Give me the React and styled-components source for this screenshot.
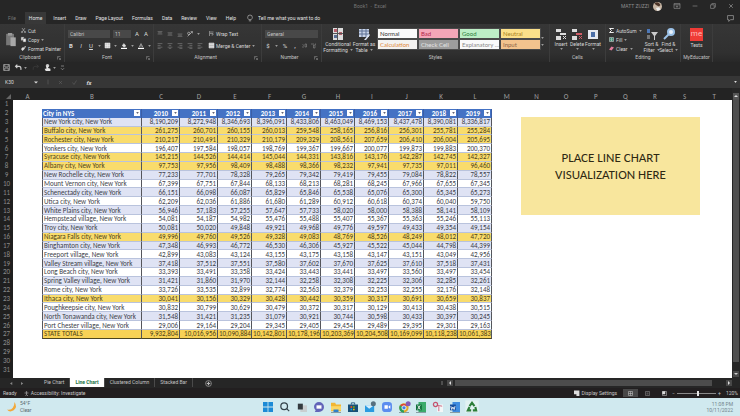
import styled, { createGlobalStyle, css } from "styled-components";

const GlobalStyle = createGlobalStyle`
  * {
    box-sizing: border-box;
  }
  body {
    margin: 0;
    background: #262626;
    font-family: Roboto, "Liberation Sans", sans-serif;
    font-size: 5px;
    color: #d8d8d8;
  }
  button, input, select {
    margin: 0;
    padding: 0;
    border: 0;
    background: none;
    color: inherit;
    font: inherit;
  }
`;

const Window = styled.div`
  display: flex;
  flex-direction: column;
  height: 100vh;
  overflow: hidden;
`;

const Spacer = styled.div`
  flex: 1;
`;

const Glyph = styled.svg`
  display: block;
  flex: none;
  width: ${(p) => p.$w || 8}px;
  height: ${(p) => p.$h || p.$w || 8}px;
  overflow: visible;
  fill: none;
  stroke: ${(p) => p.$color || "#d0d0d0"};
  opacity: ${(p) => (p.$dim ? 0.45 : 1)};
`;

/* ---------- title bar ---------- */

const TitleBar = styled.header`
  display: grid;
  grid-template-columns: 1fr auto 1fr;
  align-items: center;
  flex: none;
  height: 12px;
  padding: 0 6px;
  color: #8c8c8c;
`;

const TitleText = styled.span`
  color: #777;
  white-space: pre;
`;

const WindowControls = styled.div`
  display: flex;
  align-items: center;
  justify-content: flex-end;
  gap: 12px;
`;

const Account = styled.div`
  display: flex;
  align-items: center;
  gap: 4px;
`;

const IconButton = styled.button`
  display: flex;
  flex: none;
  align-items: center;
  justify-content: center;
  gap: 2px;
`;

/* ---------- ribbon ---------- */

const Tabs = styled.nav`
  display: flex;
  align-items: center;
  flex: none;
  gap: 1px;
  height: 12px;
  padding: 0 6px 0 4px;
`;

const Tab = styled.button`
  height: 12px;
  padding: 0 4px;
  white-space: nowrap;
  color: ${(p) => (p.$dim ? "#777" : "#e4e4e4")};
  background: ${(p) => (p.$active ? "#383838" : "none")};
  margin-left: ${(p) => (p.$active ? 4 : 0)}px;
  margin-right: ${(p) => (p.$active ? 2 : 0)}px;
`;

const TellMe = styled.label`
  display: flex;
  align-items: center;
  gap: 5px;
  margin-left: 6px;
`;

const TellMeInput = styled.input`
  width: 80px;
  &::placeholder {
    color: #e4e4e4;
    opacity: 1;
  }
`;

const Ribbon = styled.div`
  display: flex;
  flex: none;
  height: 38px;
  background: linear-gradient(#363636, #303030 75%, #282828);
`;

const Group = styled.section`
  display: flex;
  flex-direction: column;
  flex: none;
  width: ${(p) => p.$w}px;
  padding: 2px 3px 0;
  border-right: 1px solid #3c3c3c;
`;

const GroupBody = styled.div`
  display: flex;
  flex: 1;
  gap: ${(p) => p.$gap || 0}px;
`;

const GroupFooter = styled.div`
  display: flex;
  align-items: center;
  justify-content: center;
  flex: none;
  height: 9px;
  line-height: 9px;
  color: #c4c4c4;
`;

const GroupTitle = styled.span`
  flex: 1;
  text-align: center;
`;

const Stack = styled.div`
  display: flex;
  flex-direction: column;
  gap: ${(p) => p.$gap || 0}px;
  padding-top: ${(p) => p.$top || 0}px;
`;

const Row = styled.div`
  display: flex;
  align-items: center;
  height: ${(p) => p.$h || 11}px;
  gap: ${(p) => p.$gap || 3}px;
`;

const Command = styled.button`
  display: flex;
  align-items: center;
  flex: none;
  gap: 2px;
  height: ${(p) => p.$h || 9}px;
  line-height: 8px;
  white-space: nowrap;
`;

const BigCommand = styled.button`
  display: flex;
  flex-direction: column;
  align-items: center;
  flex: none;
  width: ${(p) => p.$w}px;
  padding-top: 2px;
  line-height: 6px;
  gap: 1px;
  white-space: nowrap;
`;

const CommandLine = styled.span`
  display: flex;
  align-items: center;
  justify-content: center;
  gap: 2px;
`;

const Select = styled.select`
  appearance: none;
  flex: none;
  width: ${(p) => p.$w}px;
  height: 8px;
  padding: 0 2px;
  background: #484848;
  color: #c4c4c4;
`;

const Letter = styled.span`
  width: 6px;
  text-align: center;
  font-size: 6px;
  font-weight: ${(p) => (p.$bold ? 700 : 400)};
  font-style: ${(p) => (p.$italic ? "italic" : "normal")};
  text-decoration: ${(p) => (p.$underline ? "underline" : "none")};
`;

const Gallery = styled.div`
  display: grid;
  grid-template-columns: repeat(4, 39px);
  grid-auto-rows: 9px;
  gap: 2px;
  height: 22px;
  margin-top: 2px;
  padding: 1px;
  background: #4a4a4a;
`;

const StyleCell = styled.button`
  padding: 0 2px;
  overflow: hidden;
  background: ${(p) => p.$bg};
  color: ${(p) => p.$fg};
  font-family: Lato, sans-serif;
  font-size: 6px;
  line-height: 9px;
  text-align: left;
  white-space: nowrap;
`;

const AddInLogo = styled.span`
  display: block;
  width: 13px;
  height: 13px;
  background: #ef3b36;
  color: #fbb;
  font-size: 8px;
  line-height: 12px;
  text-align: center;
`;

/* ---------- quick access and formula bar ---------- */

const QuickAccess = styled.div`
  display: flex;
  align-items: flex-start;
  flex: none;
  gap: 5px;
  height: 14px;
  padding: 1px 3px 0;
`;

const FormulaBar = styled.div`
  display: flex;
  align-items: center;
  flex: none;
  height: 12px;
  padding: 0 3px 0 5px;
  gap: 9px;
  background: #363636;
`;

const NameBox = styled.input`
  width: 20px;
`;

const FormulaInput = styled.input`
  flex: 1;
  min-width: 0;
`;

/* ---------- sheet ---------- */

const SheetArea = styled.main`
  display: flex;
  flex: 1;
  min-height: 0;
  background: #262626;
`;

const Canvas = styled.div`
  position: relative;
  flex: 1;
  min-width: 0;
  overflow: hidden;
  background: #fff;
`;

const Sheet = styled.table`
  width: 100%;
  height: calc(100% + 5px);
  table-layout: fixed;
  border-spacing: 0;
  color: #38383e;
  font-family: Calibri, Carlito, Lato, sans-serif;
  font-size: 7px;
  line-height: 7px;
`;

const Col = styled.col`
  width: ${(p) => (p.$w ? `${p.$w}px` : "auto")};
`;

const ColumnLetter = styled.th`
  height: 12px;
  padding: 4px 0 0;
  background: #232323;
  color: #a0a0a0;
  font-weight: 400;
  font-size: 7px;
`;

const RowNumber = styled.th`
  height: 8px;
  padding: 0 0 1px;
  background: #1f1f1f;
  color: #8a8a8a;
  font-weight: 400;
  text-align: center;
`;

const Cell = styled.td`
  padding: 0;
`;

const fills = {
  band: "#dfe3f4",
  plain: "#fff",
  gold: "#f9dc6c",
  total: "#f8d256",
};

const dataCell = css`
  padding: 0 1px;
  border-right: 1px solid #55565c;
  border-bottom: 1px solid ${(p) => (p.$fill === "total" ? "#4d451f" : "#b9c3dd")};
  background: ${(p) => fills[p.$fill]};
  color: ${(p) => (p.$fill === "gold" || p.$fill === "total" ? "#4d4219" : "#3c3e48")};
  white-space: nowrap;
`;

const CityCell = styled.td`
  ${dataCell}
  border-left: 1px solid #55565c;
`;

const NumberCell = styled.td`
  ${dataCell}
  text-align: right;
`;

const HeadCell = styled.th`
  padding: 0 1px;
  border-right: 1px solid #3b5ea6;
  background: #4472c4;
  color: #fff;
  font-weight: 700;
`;

const HeadContent = styled.div`
  display: flex;
  align-items: center;
  justify-content: ${(p) => (p.$start ? "space-between" : "flex-end")};
  gap: 4px;
`;

const FilterButton = styled.button`
  display: flex;
  align-items: center;
  justify-content: center;
  width: 6px;
  height: 6px;
  background: #fff;
`;

// floating text box drawn over the cells
const ChartPlaceholder = styled.div`
  position: absolute;
  top: 29px;
  left: 521px;
  display: flex;
  align-items: center;
  justify-content: center;
  width: 179px;
  height: 98px;
  background: #f8e69d;
  color: #2e2812;
  font-family: Calibri, Carlito, Lato, sans-serif;
  font-size: 13px;
  line-height: 17px;
  text-align: center;
`;

const VerticalScroll = styled.div`
  display: flex;
  flex-direction: column;
  align-items: center;
  flex: none;
  width: 8px;
  padding: 5px 0 1px;
`;

const VerticalThumb = styled.div`
  flex: 1;
  width: 6px;
  margin-bottom: 9px;
  background: #505050;
`;

/* ---------- sheet tabs and status bar ---------- */

const SheetTabs = styled.nav`
  display: flex;
  align-items: center;
  flex: none;
  height: 10px;
  padding-right: 8px;
`;

const SheetNav = styled.div`
  display: flex;
  gap: 8px;
  width: 39px;
  padding-left: 10px;
`;

const SheetTab = styled.button`
  height: 9px;
  align-self: flex-start;
  padding: 0 5px;
  border-right: 1px solid #4a4a4a;
  line-height: 9px;
  white-space: nowrap;
  color: ${(p) => (p.$active ? "#217346" : "#c4c4c4")};
  background: ${(p) => (p.$active ? "#fff" : "none")};
  font-weight: ${(p) => (p.$active ? 700 : 400)};
`;

const NewSheet = styled(IconButton)`
  margin-left: 12px;
`;

const HorizontalScroll = styled.div`
  display: flex;
  align-items: center;
  width: 39%;
  gap: 2px;
`;

const HorizontalThumb = styled.div`
  flex: 1;
  height: 6px;
  margin-right: 12px;
  background: #4c4c4c;
`;

const StatusBar = styled.footer`
  display: flex;
  align-items: center;
  flex: none;
  height: 10px;
  padding: 0 2px 0 3px;
  background: #221f20;
  color: #c8c8c8;
`;

const StatusItem = styled.button`
  display: flex;
  align-items: center;
  gap: 2px;
  margin-left: ${(p) => p.$gap || 0}px;
  white-space: nowrap;
`;

const ViewButton = styled.button`
  display: flex;
  align-items: center;
  justify-content: center;
  width: 15px;
  height: 8px;
  background: ${(p) => (p.$active ? "#484848" : "none")};
`;

const Zoom = styled.input`
  appearance: none;
  width: 39px;
  height: 6px;
  margin: 0 2px;
  background: linear-gradient(#8a8a8a, #8a8a8a) center / 100% 1px no-repeat;
  &::-webkit-slider-thumb {
    appearance: none;
    width: 2px;
    height: 5px;
    background: #e8e8e8;
  }
`;

/* ---------- taskbar ---------- */

const Taskbar = styled.footer`
  display: grid;
  grid-template-columns: 1fr auto 1fr;
  align-items: center;
  flex: none;
  height: 18px;
  padding: 0 7px;
  background: #d0e9ef;
  color: #5a6a70;
`;

const Weather = styled.div`
  display: flex;
  align-items: center;
  gap: 3px;
  line-height: 7px;
`;

const Apps = styled.div`
  display: flex;
  gap: 7px;
`;

const AppButton = styled.button`
  display: flex;
  flex-direction: column;
  align-items: center;
  gap: 1px;
  padding-top: 1px;
  border-bottom: 1px solid ${(p) => (p.$running ? "#8a9da3" : "transparent")};
`;

const Clock = styled.div`
  line-height: 6px;
  text-align: right;
  color: #71848b;
`;

const cities = [
  ["New York city, New York", "8,190,209 8,272,948 8,346,693 8,396,091 8,433,806 8,463,049 8,469,153 8,437,478 8,390,081 8,336,817"],
  ["Buffalo city, New York", "261,275 260,701 260,155 260,013 259,548 258,165 256,816 256,301 255,781 255,284"],
  ["Rochester city, New York", "210,217 210,491 210,329 210,179 209,329 208,561 207,659 206,410 206,004 205,695"],
  ["Yonkers city, New York", "196,407 197,584 198,057 198,769 199,367 199,667 200,077 199,873 199,883 200,370"],
  ["Syracuse city, New York", "145,215 144,526 144,414 145,044 144,331 143,816 143,176 142,287 142,745 142,327"],
  ["Albany city, New York", "97,753 97,956 98,409 98,488 98,366 98,232 97,941 97,735 97,011 96,460"],
  ["New Rochelle city, New York", "77,233 77,701 78,328 79,265 79,342 79,419 79,455 79,084 78,822 78,557"],
  ["Mount Vernon city, New York", "67,399 67,751 67,844 68,133 68,213 68,281 68,245 67,966 67,655 67,345"],
  ["Schenectady city, New York", "66,151 66,098 66,087 65,829 65,846 65,538 65,076 65,300 65,345 65,273"],
  ["Utica city, New York", "62,209 62,036 61,886 61,680 61,289 60,912 60,618 60,374 60,040 59,750"],
  ["White Plains city, New York", "56,946 57,183 57,255 57,647 57,733 58,020 58,000 58,388 58,141 58,109"],
  ["Hempstead village, New York", "54,081 54,187 54,982 55,476 55,488 55,407 55,367 55,363 55,246 55,113"],
  ["Troy city, New York", "50,081 50,020 49,848 49,921 49,968 49,776 49,597 49,433 49,354 49,154"],
  ["Niagara Falls city, New York", "49,996 49,760 49,526 49,328 49,083 48,769 48,526 48,249 48,012 47,720"],
  ["Binghamton city, New York", "47,348 46,993 46,772 46,530 46,306 45,927 45,522 45,044 44,798 44,399"],
  ["Freeport village, New York", "42,899 43,083 43,124 43,155 43,175 43,158 43,147 43,151 43,049 42,956"],
  ["Valley Stream village, New York", "37,418 37,512 37,551 37,580 37,602 37,670 37,625 37,610 37,518 37,431"],
  ["Long Beach city, New York", "33,393 33,491 33,358 33,424 33,443 33,441 33,497 33,560 33,497 33,454"],
  ["Spring Valley village, New York", "31,421 31,860 31,970 32,144 32,258 32,308 32,225 32,306 32,285 32,261"],
  ["Rome city, New York", "33,726 33,535 32,899 32,774 32,563 32,379 32,253 32,255 32,176 32,148"],
  ["Ithaca city, New York", "30,041 30,156 30,329 30,428 30,442 30,359 30,317 30,691 30,659 30,837"],
  ["Poughkeepsie city, New York", "30,832 30,799 30,629 30,479 30,372 30,317 30,129 30,413 30,438 30,515"],
  ["North Tonawanda city, New York", "31,548 31,421 31,235 31,079 30,921 30,744 30,598 30,433 30,397 30,245"],
  ["Port Chester village, New York", "29,006 29,164 29,204 29,345 29,405 29,454 29,489 29,395 29,301 29,163"],
  ["STATE TOTALS", "9,932,804 10,016,956 10,090,884 10,142,801 10,178,196 10,203,369 10,204,508 10,169,099 10,118,238 10,061,383"],
];

const years = [2010, 2011, 2012, 2013, 2014, 2015, 2016, 2017, 2018, 2019];
const letters = "ABCDEFGHIJKLMNOPQRST".split("");
const columnWidths = [13, 29, 100, 38, 38, 34, 35, 34, 34, 34, 35, 34, 34];
const goldRows = [4, 5, 7, 8, 16, 23];
const lastNumberedRow = 31;

const fillFor = (row) => {
  if (row === 27) return "total";
  if (goldRows.includes(row)) return "gold";
  return row % 2 ? "band" : "plain";
};

const galleryStyles = [
  ["Normal", "#fafafa", "#333"],
  ["Bad", "#f4a6b8", "#b3264a"],
  ["Good", "#bdeec6", "#2a7a3a"],
  ["Neutral", "#fbe08a", "#a8801f"],
  ["Calculation", "#f4f2f0", "#e0883c"],
  ["Check Cell", "#9c9c9c", "#e4e4e4"],
  ["Explanatory ...", "#fafafa", "#8c8c8c"],
  ["Input", "#f3c38e", "#8a6448"],
];

const Caret = ({ color = "#9a9a9a" }) => (
  <Glyph viewBox="0 0 4 3" $w={3} $h={2} $color="none" aria-hidden="true">
    <path d="M0 0h4L2 3z" fill={color} />
  </Glyph>
);

const Launcher = () => (
  <Glyph viewBox="0 0 8 8" $w={4} $color="#9a9a9a">
    <path d="M1 7V1h6M3 3l4 4M7 4v3H4" />
  </Glyph>
);

const Align = ({ lines, w = 6 }) => (
  <Glyph viewBox="0 0 10 10" $w={w} $color="#858585">
    {lines.map(([x1, x2, y]) => (
      <path key={y} d={`M${x1} ${y}H${x2}`} />
    ))}
  </Glyph>
);

const alignTop = [[1, 9, 1], [2, 8, 3], [1, 9, 5]];
const alignMiddle = [[1, 9, 3], [2, 8, 5], [1, 9, 7]];
const alignBottom = [[1, 9, 5], [2, 8, 7], [1, 9, 9]];
const alignLeft = [[1, 9, 1], [1, 6, 4], [1, 9, 7], [1, 6, 9]];
const alignCenter = [[1, 9, 1], [3, 7, 4], [1, 9, 7], [3, 7, 9]];
const alignRight = [[1, 9, 1], [4, 9, 4], [1, 9, 7], [4, 9, 9]];

const Footer = ({ title, launcher }) => (
  <GroupFooter>
    <GroupTitle>{title}</GroupTitle>
    {launcher && (
      <IconButton aria-label={`${title} settings`}>
        <Launcher />
      </IconButton>
    )}
  </GroupFooter>
);

const ClipboardGroup = () => (
  <Group $w={65}>
    <GroupBody $gap={3}>
      <IconButton aria-label="Paste">
        <Glyph viewBox="0 0 14 16" $w={15} $h={14} $color="none">
          <path d="M2 1h9v13H2z" fill="#777" />
          <path d="M4 0h5v3H4z" fill="#999" />
          <path d="M7 5h6v10H7z" fill="#a8a8a8" />
        </Glyph>
      </IconButton>
      <Stack>
        <Command>
          <Glyph viewBox="0 0 10 10" $w={5}>
            <path d="M2 0l5 7M8 0L3 7" />
            <circle cx="2" cy="8" r="1.5" />
            <circle cx="8" cy="8" r="1.5" />
          </Glyph>
          Cut
        </Command>
        <Command>
          <Glyph viewBox="0 0 10 10" $w={5} $color="#555">
            <path d="M0 0h6v7H0z" fill="#ddd" />
            <path d="M4 3h6v7H4z" fill="#eee" />
          </Glyph>
          Copy <Caret />
        </Command>
        <Command>
          <Glyph viewBox="0 0 10 10" $w={5} $color="none">
            <path d="M0 6l4-4 4 3-5 5z" fill="#ddd" />
            <path d="M6 2l3-2 1 2-3 2z" fill="#ddd" />
          </Glyph>
          Format Painter
        </Command>
      </Stack>
    </GroupBody>
    <Footer title="Clipboard" launcher />
  </Group>
);

const FontGroup = () => (
  <Group $w={89}>
    <GroupBody>
      <Stack $gap={1} $top={2}>
        <Row>
          <Select $w={42} aria-label="Font">
            <option>Calibri</option>
          </Select>
          <Select $w={18} aria-label="Font size">
            <option>11</option>
          </Select>
          <Letter>A</Letter>
          <Letter>A</Letter>
        </Row>
        <Row $gap={4}>
          <Letter $bold>B</Letter>
          <Letter $italic>I</Letter>
          <Letter $underline>U</Letter>
          <Caret />
          <IconButton aria-label="Borders">
            <Glyph viewBox="0 0 10 10" $w={5} $color="#f0f0f0">
              <path d="M0 0h10v10H0zM5 0v10M0 5h10" fill="#ccc" />
            </Glyph>
          </IconButton>
          <Caret />
          <IconButton aria-label="Fill color">
            <Glyph viewBox="0 0 10 10" $w={6}>
              <path d="M2 4l3-3 3 4-3 2z" fill="#ddd" />
              <path d="M0 9h10" strokeWidth="2" stroke="#fff" />
            </Glyph>
          </IconButton>
          <Caret />
          <IconButton aria-label="Font color">
            <Glyph viewBox="0 0 10 10" $w={6}>
              <path d="M2 7l3-6 3 6M3 5h4" />
              <path d="M0 9h10" strokeWidth="2" stroke="#fff" />
            </Glyph>
          </IconButton>
          <Caret />
        </Row>
      </Stack>
    </GroupBody>
    <Footer title="Font" launcher />
  </Group>
);

const AlignmentGroup = () => (
  <Group $w={108}>
    <GroupBody $gap={6}>
      <Stack $gap={1} $top={2}>
        <Row $gap={4}>
          <Align lines={alignTop} />
          <Align lines={alignMiddle} />
          <Align lines={alignBottom} />
          <Glyph viewBox="0 0 10 10" $w={6}>
            <path d="M1 9L9 1M6 1h3v3" />
            <circle cx="3" cy="4" r="2" />
          </Glyph>
          <Caret />
        </Row>
        <Row $gap={4}>
          <Align lines={alignLeft} />
          <Align lines={alignCenter} />
          <Align lines={alignRight} />
          <Align lines={alignRight} />
          <Align lines={alignLeft} />
        </Row>
      </Stack>
      <Stack $gap={1} $top={2}>
        <Command $h={11}>
          <Glyph viewBox="0 0 10 10" $w={5}>
            <path d="M1 0v10M2 2h7M2 5h6v3H5" />
          </Glyph>
          Wrap Text
        </Command>
        <Command $h={11}>
          <Glyph viewBox="0 0 10 10" $w={5} $color="#eee">
            <path d="M0 0h10v10H0zM0 3h10M0 7h10" fill="#bbb" />
          </Glyph>
          Merge &amp; Center <Caret />
        </Command>
      </Stack>
    </GroupBody>
    <Footer title="Alignment" launcher />
  </Group>
);

const NumberGroup = () => (
  <Group $w={60}>
    <GroupBody>
      <Stack $gap={1} $top={2}>
        <Row>
          <Select $w={53} aria-label="Number format">
            <option>General</option>
          </Select>
        </Row>
        <Row $gap={4}>
          <Letter>$</Letter>
          <Caret />
          <Letter>%</Letter>
          <Letter $bold>,</Letter>
          <Glyph viewBox="0 0 10 10" $w={5} $color="#999">
            <path d="M0 8h4M6 2v6h3V2zM4 5L1 3" />
          </Glyph>
          <Glyph viewBox="0 0 10 10" $w={5} $color="#999">
            <path d="M0 2h6M5 4v6h3V4zM9 1v3" />
          </Glyph>
        </Row>
      </Stack>
    </GroupBody>
    <Footer title="Number" launcher />
  </Group>
);

const StylesGroup = () => (
  <Group $w={228}>
    <GroupBody>
      <BigCommand $w={26}>
        <Glyph viewBox="0 0 12 12" $w={12} $color="none">
          <path d="M1 0h10v12H1z" fill="#ddd" />
          <path d="M2 1h3v3H2zM7 4h3v3H7z" fill="#b8606c" />
          <path d="M2 7h3v3H2z" fill="#596f95" />
          <path d="M5 0h1v12H5zM1 5h10v1H1z" fill="#555" />
        </Glyph>
        <span>
          <CommandLine>Conditional</CommandLine>
          <CommandLine>
            Formatting <Caret />
          </CommandLine>
        </span>
      </BigCommand>
      <BigCommand $w={26}>
        <Glyph viewBox="0 0 12 12" $w={12} $color="none">
          <path d="M1 1h10v8H1z" fill="#c9d4e8" />
          <path d="M1 3h10M1 6h10M4 1v8M8 1v8" stroke="#5d7095" />
          <path d="M6 12l5-6 1 1-4 5z" fill="#dde6f5" />
        </Glyph>
        <span>
          <CommandLine>Format as</CommandLine>
          <CommandLine>
            Table <Caret />
          </CommandLine>
        </span>
      </BigCommand>
      <Gallery>
        {galleryStyles.map(([name, bg, fg]) => (
          <StyleCell key={name} $bg={bg} $fg={fg}>
            {name}
          </StyleCell>
        ))}
      </Gallery>
      <Stack $gap={5} $top={11}>
        <Caret />
        <Caret />
      </Stack>
    </GroupBody>
    <Footer title="Styles" />
  </Group>
);

const CellsGroup = () => (
  <Group $w={56}>
    <GroupBody>
      {[
        ["Insert", "#ddd"],
        ["Delete", "#cf5b66"],
      ].map(([name, color]) => (
        <BigCommand key={name} $w={16}>
          <Glyph viewBox="0 0 12 12" $w={12} $color="none">
            <path d="M1 1h5v3H1zM1 8h5v4H1z" fill="#ddd" />
            <path d="M5 5h6v2H5z" fill={color} />
            <path d="M8 8l3 3M11 8l-3 3" stroke={color} />
          </Glyph>
          {name}
          <Caret />
        </BigCommand>
      ))}
      <BigCommand $w={16}>
        <Glyph viewBox="0 0 12 12" $w={12} $color="none">
          <path d="M1 2h10v9H1z" fill="#e4e8f0" />
          <path d="M4 4h4v5H4z" fill="#4a6ea8" />
        </Glyph>
        Format
        <Caret />
      </BigCommand>
    </GroupBody>
    <Footer title="Cells" />
  </Group>
);

const EditingGroup = () => (
  <Group $w={75}>
    <GroupBody>
      <Stack>
        <Command>
          <Glyph viewBox="0 0 10 10" $w={5} $color="#eee">
            <path d="M9 2V1H1l4 4-4 4h8V8" strokeWidth="2" />
          </Glyph>
          AutoSum <Caret />
        </Command>
        <Command>
          <Glyph viewBox="0 0 10 10" $w={5} $color="#ddd">
            <path d="M1 1h8v8H1z" fill="#3f8f76" />
            <path d="M5 2v5M3 5l2 2 2-2" />
          </Glyph>
          Fill <Caret />
        </Command>
        <Command>
          <Glyph viewBox="0 0 10 10" $w={5} $color="none">
            <path d="M0 7l5-6 5 2-5 6z" fill="#e07c9c" />
          </Glyph>
          Clear <Caret />
        </Command>
      </Stack>
      <Spacer />
      <BigCommand $w={17}>
        <Glyph viewBox="0 0 12 12" $w={12} $color="none">
          <path d="M1 1h3v4H1z" fill="#4d78b8" />
          <path d="M1 7h3v4H1z" fill="#777" />
          <path d="M5 4h7L9 8v4H8V8z" fill="#ccc" />
        </Glyph>
        <span>
          <CommandLine>Sort &amp;</CommandLine>
          <CommandLine>
            Filter <Caret />
          </CommandLine>
        </span>
      </BigCommand>
      <BigCommand $w={17}>
        <Glyph viewBox="0 0 12 12" $w={12} $color="#9cc2e8">
          <circle cx="8" cy="4" r="3" fill="#e9f2fc" strokeWidth="2" />
          <path d="M6 6l-5 5" strokeWidth="2" />
        </Glyph>
        <span>
          <CommandLine>Find &amp;</CommandLine>
          <CommandLine>
            Select <Caret />
          </CommandLine>
        </span>
      </BigCommand>
    </GroupBody>
    <Footer title="Editing" />
  </Group>
);

const SpreadsheetTable = () => (
  <Sheet>
    <colgroup>
      {columnWidths.map((w, i) => (
        <Col key={i} $w={w} />
      ))}
      {letters.slice(12).map((l) => (
        <Col key={l} />
      ))}
      <Col $w={3} />
    </colgroup>
    <thead>
      <tr>
        <ColumnLetter aria-label="Select all">
          <Glyph viewBox="0 0 10 10" $w={5} $color="none">
            <path d="M10 0v10H0z" fill="#666" transform="translate(12 0)" />
          </Glyph>
        </ColumnLetter>
        {letters.map((l) => (
          <ColumnLetter key={l}>{l}</ColumnLetter>
        ))}
        <ColumnLetter as="td" />
      </tr>
    </thead>
    <tbody>
      {Array.from({ length: 32 }, (_, i) => i + 1).map((row) => {
        const city = cities[row - 3];
        return (
          <tr key={row}>
            <RowNumber>{row <= lastNumberedRow && row}</RowNumber>
            <Cell />
            {row === 2 && (
              <>
                <HeadCell>
                  <HeadContent $start>
                    City in NYS
                    <FilterButton aria-label="Filter City in NYS">
                      <Caret color="#667" />
                    </FilterButton>
                  </HeadContent>
                </HeadCell>
                {years.map((year) => (
                  <HeadCell key={year}>
                    <HeadContent>
                      {year}
                      <FilterButton aria-label={`Filter ${year}`}>
                        <Caret color="#667" />
                      </FilterButton>
                    </HeadContent>
                  </HeadCell>
                ))}
                <Cell colSpan={9} />
              </>
            )}
            {city && (
              <>
                <CityCell $fill={fillFor(row)}>{city[0]}</CityCell>
                {city[1].split(" ").map((value, i) => (
                  <NumberCell key={i} $fill={fillFor(row)}>
                    {value}
                  </NumberCell>
                ))}
                <Cell colSpan={9} />
              </>
            )}
            {!city && row !== 2 && <Cell colSpan={20} />}
          </tr>
        );
      })}
    </tbody>
  </Sheet>
);

const apps = [
  ["Start", false, <path d="M0 0h5.500v5.500H0zM6.500 0H12v5.500H6.500zM0 6.500h5.500V12H0zM6.500 6.500H12V12H6.500z" fill="#1c8ad6" />],
  ["Search", false, <g stroke="#34424a" strokeWidth="1.500"><circle cx="5" cy="5" r="4" /><path d="M8 8l3 3" /></g>],
  ["Task view", false, <g><path d="M4 4h8v8H4z" fill="#c9ced0" /><path d="M1 2h6v7H1z" fill="#333b40" /></g>],
  ["Chat", false, <g><path d="M0 6a6 6 0 1 1 6 6H1l1-2a6 6 0 0 1-2-4z" fill="#6264b8" /><path d="M3 4h6v4H3z" fill="#fff" /></g>],
  ["File Explorer", true, <g><path d="M0 1h5l1 2h6v8H0z" fill="#f2b632" /><path d="M0 5h12v5H0z" fill="#fbd766" /><path d="M3 9h6v3H3z" fill="#2f80c8" /></g>],
  ["Store", false, <g><path d="M0 3h12v9H0z" fill="#174f77" /><path d="M4 3V1h4v2" stroke="#174f77" /><path d="M3 5h2v2H3z" fill="#f25022" /><path d="M6 5h2v2H6z" fill="#7fba00" /><path d="M3 8h2v2H3z" fill="#00a4ef" /><path d="M6 8h2v2H6z" fill="#ffb900" /></g>],
  ["Mail", false, <g><path d="M0 4h11v8H0z" fill="#2a9be0" /><path d="M0 4l5 4 6-4" fill="#d6effc" /><circle cx="10" cy="2" r="3" fill="#56707e" /></g>],
  ["Zoom", false, <g><rect width="12" height="12" rx="4" fill="#5b8def" /><path d="M3 4h4v4H3zM8 5l2-1v4L8 7z" fill="#fff" /></g>],
  ["Chrome", true, <g><circle cx="6" cy="7" r="5.500" fill="#e2a92b" /><path d="M1 4a6 6 0 0 1 9 0L6 7z" fill="#db4437" /><path d="M1 4a6 6 0 0 0 5 9V7z" fill="#2f9e58" /><circle cx="6" cy="7" r="2.500" fill="#3f7ee8" stroke="#fff" /><circle cx="11" cy="2" r="3" fill="#8459b5" /></g>],
  ["Excel", true, <g><path d="M3 0h9v12H3z" fill="#3cab6b" /><path d="M0 3h7v7H0z" fill="#12703c" /><path d="M2 4l3 5M5 4L2 9" stroke="#fff" /></g>],
  ["Snipping Tool", false, <g><path d="M5 3h7v9H5z" fill="#f4f7f8" /><circle cx="3" cy="3" r="2.500" stroke="#c5526e" strokeWidth="1.500" /><path d="M5 4l6 1M7 5v6" stroke="#c5526e" /></g>],
  ["Word", true, <g><path d="M3 0h9v12H3z" fill="#3f8ce0" /><path d="M0 3h7v7H0z" fill="#174f9e" /><path d="M1 5l1 4 1.500-3L5 9l1-4" stroke="#fff" /></g>],
  ["Camtasia", true, <g><path d="M-2-2h16v15H-2z" fill="#e2f2f2" /><path d="M3 5l3-4 3 4M10 6l1 4H7M5 10H1l2-4" stroke="#2c7d38" strokeWidth="2.500" /></g>],
];

const App = () => {
  return (
    <>
      <GlobalStyle />
      <Window>
        <TitleBar>
          <span />
          <TitleText>Book1  -  Excel</TitleText>
          <WindowControls>
            <Account>
              MATT ZUZZI
              <Glyph viewBox="0 0 12 12" $w={9} $color="none">
                <circle cx="6" cy="6" r="6" fill="#c9b8a6" />
                <path d="M2 2q5-4 8 2L8 6 4 4z" fill="#4d3528" />
                <path d="M4 8l4-1 2 3-4 2z" fill="#eee" />
              </Glyph>
            </Account>
            <IconButton aria-label="Ribbon display options">
              <Glyph viewBox="0 0 10 10" $w={6} $color="#999">
                <path d="M0 1h10v8H0zM0 3h10M5 8V5M3 6l2-1 2 1" />
              </Glyph>
            </IconButton>
            <IconButton aria-label="Minimize">
              <Glyph viewBox="0 0 10 10" $w={6} $color="#999">
                <path d="M1 5h8" />
              </Glyph>
            </IconButton>
            <IconButton aria-label="Restore">
              <Glyph viewBox="0 0 10 10" $w={6} $color="#999">
                <path d="M1 3h6v6H1zM3 3V1h6v6H7" />
              </Glyph>
            </IconButton>
            <IconButton aria-label="Close">
              <Glyph viewBox="0 0 10 10" $w={6} $color="#aaa">
                <path d="M2 2l6 6M8 2L2 8" />
              </Glyph>
            </IconButton>
          </WindowControls>
        </TitleBar>

        <Tabs>
          <Tab $dim>File</Tab>
          <Tab $active>Home</Tab>
          {["Insert", "Draw", "Page Layout", "Formulas", "Data", "Review", "View", "Help"].map((name) => (
            <Tab key={name}>{name}</Tab>
          ))}
          <TellMe>
            <Glyph viewBox="0 0 10 12" $w={6} $h={7}>
              <path d="M3 8Q1 6 1 4a4 4 0 0 1 8 0q0 2-2 4zM3 10h4" />
            </Glyph>
            <TellMeInput aria-label="Tell me" placeholder="Tell me what you want to do" />
          </TellMe>
          <Spacer />
          <IconButton aria-label="Comments">
            <Glyph viewBox="0 0 12 12" $w={7} $color="#bbb">
              <path d="M1 1h10v7H6l-3 3V8H1z" />
            </Glyph>
          </IconButton>
        </Tabs>

        <Ribbon>
          <ClipboardGroup />
          <FontGroup />
          <AlignmentGroup />
          <NumberGroup />
          <StylesGroup />
          <CellsGroup />
          <EditingGroup />
          <Group $w={32}>
            <GroupBody>
              <BigCommand $w={25}>
                <AddInLogo>me</AddInLogo>
                Tests
              </BigCommand>
            </GroupBody>
            <Footer title="MyEducator" />
          </Group>
        </Ribbon>

        <QuickAccess>
          <IconButton aria-label="Save">
            <Glyph viewBox="0 0 12 12" $w={7} $h={9}>
              <path d="M1 1h10v10H1zM3 1v4h6V1M3 11V7h6v4" />
            </Glyph>
          </IconButton>
          <IconButton aria-label="Undo">
            <Glyph viewBox="0 0 12 12" $w={7} $h={9}>
              <path d="M4 1L1 4l3 3M1 4h6q4 0 3 6" strokeWidth="2" />
            </Glyph>
            <Caret />
          </IconButton>
          <IconButton aria-label="Redo">
            <Glyph viewBox="0 0 12 12" $w={7} $h={9} $dim $color="#666">
              <path d="M8 1l3 3-3 3M11 4H5q-4 0-3 6" />
            </Glyph>
          </IconButton>
          <IconButton aria-label="Touch mode">
            <Glyph viewBox="0 0 12 12" $w={7} $h={9} $color="none">
              <circle cx="6" cy="3" r="3" fill="#ccc" />
              <path d="M4 4h3v3l4 1v4H3L1 8h3z" fill="#e4e4e4" />
            </Glyph>
            <Caret />
          </IconButton>
          <IconButton aria-label="Customize">
            <Glyph viewBox="0 0 4 12" $w={3} $h={9} $color="#999">
              <path d="M0 4h4M0 7l2 2 2-2" />
            </Glyph>
          </IconButton>
        </QuickAccess>

        <FormulaBar>
          <NameBox aria-label="Name box" defaultValue="K30" />
          <Glyph viewBox="-4 0 8 4" $w={4} $h={3} $color="none">
            <path d="M-4 0h8L0 4z" fill="#ddd" />
          </Glyph>
          <Glyph viewBox="0 0 2 10" $w={2} $h={6} $color="#666">
            <path d="M1 1v8" />
          </Glyph>
          <Glyph viewBox="0 0 10 10" $w={5} $color="#666">
            <path d="M2 2l6 6M8 2L2 8" />
          </Glyph>
          <Glyph viewBox="0 0 10 10" $w={5} $color="#666">
            <path d="M1 5l3 4 5-8" />
          </Glyph>
          <Letter $italic $bold>
            fx
          </Letter>
          <FormulaInput aria-label="Formula" />
          <Caret color="#ddd" />
        </FormulaBar>

        <SheetArea>
          <Canvas>
            <SpreadsheetTable />
            <ChartPlaceholder>
              PLACE LINE CHART
              <br />
              VISUALIZATION HERE
            </ChartPlaceholder>
          </Canvas>
          <VerticalScroll>
            <Glyph viewBox="0 0 6 6" $w={6} $color="none">
              <path d="M0 0h6v6H0z" fill="#555" />
              <path d="M1 4h4L3 2z" fill="#ddd" />
            </Glyph>
            <VerticalThumb />
            <Glyph viewBox="0 0 6 6" $w={6} $color="none">
              <path d="M0 0h6v6H0z" fill="#484848" />
              <path d="M1 2h4L3 4z" fill="#ccc" />
            </Glyph>
          </VerticalScroll>
        </SheetArea>

        <SheetTabs>
          <SheetNav>
            <Glyph viewBox="0 0 4 4" $w={3} $color="none">
              <path d="M3 0v4L0 2z" fill="#888" />
            </Glyph>
            <Glyph viewBox="0 0 4 4" $w={3} $color="none">
              <path d="M0 0v4l3-2z" fill="#888" />
            </Glyph>
          </SheetNav>
          <SheetTab>Pie Chart</SheetTab>
          <SheetTab $active>Line Chart</SheetTab>
          <SheetTab>Clustered Column</SheetTab>
          <SheetTab>Stacked Bar</SheetTab>
          <NewSheet aria-label="New sheet">
            <Glyph viewBox="0 0 12 12" $w={7} $color="#bbb">
              <circle cx="6" cy="6" r="5" />
              <path d="M6 3v6M3 6h6" strokeWidth="2" />
            </Glyph>
          </NewSheet>
          <Spacer />
          <HorizontalScroll>
            <Glyph viewBox="0 0 6 6" $w={6} $color="none">
              <path d="M-5 1v4" stroke="#777" />
              <path d="M0 0h6v6H0z" fill="#484848" />
              <path d="M4 1v4L2 3z" fill="#ddd" />
            </Glyph>
            <HorizontalThumb />
            <Glyph viewBox="0 0 6 6" $w={6} $color="none">
              <path d="M0 0h6v6H0z" fill="#484848" />
              <path d="M2 1v4l2-2z" fill="#ddd" />
            </Glyph>
          </HorizontalScroll>
        </SheetTabs>

        <StatusBar>
          <span>Ready</span>
          <StatusItem $gap={7}>
            <Glyph viewBox="0 0 10 10" $w={5}>
              <circle cx="5" cy="2" r="1" />
              <path d="M1 4h8M5 4v3l-2 3M5 7l3 3" />
            </Glyph>
            Accessibility: Investigate
          </StatusItem>
          <Spacer />
          <StatusItem>
            <Glyph viewBox="0 0 10 10" $w={6} $color="none">
              <path d="M0 1h9v6H0zM4 7h5v3H4z" fill="#ddd" />
            </Glyph>
            Display Settings
          </StatusItem>
          <StatusItem as="div" $gap={6}>
            <ViewButton $active aria-label="Normal view">
              <Glyph viewBox="0 0 10 10" $w={5}>
                <path d="M1 1h8v8H1zM1 5h8M5 1v8" />
              </Glyph>
            </ViewButton>
            <ViewButton aria-label="Page layout view">
              <Glyph viewBox="0 0 10 10" $w={5} $color="#999">
                <path d="M1 1h8v8H1zM3 4h4M3 6h4" />
              </Glyph>
            </ViewButton>
            <ViewButton aria-label="Page break view">
              <Glyph viewBox="0 0 10 10" $w={5}>
                <path d="M1 1h8v8H1z" />
                <path d="M1 1h5v5H1z" fill="#ddd" />
              </Glyph>
            </ViewButton>
          </StatusItem>
          <span>−</span>
          <Zoom type="range" aria-label="Zoom" min={0} max={100} defaultValue={53} />
          <span>+</span>
          <StatusItem $gap={5}>120%</StatusItem>
        </StatusBar>

        <Taskbar>
          <Weather>
            <Glyph viewBox="0 0 12 12" $w={10} $color="none">
              <path d="M9 0q4 6-1 10-5 3-8-1 5 1 7-2 2-3 2-7z" fill="#f2a93b" />
            </Glyph>
            <div>
              54°F
              <br />
              Clear
            </div>
          </Weather>
          <Apps>
            {apps.map(([name, running, art]) => (
              <AppButton key={name} $running={running} aria-label={name}>
                <Glyph viewBox="0 0 12 12" $w={10} $color="none">
                  {art}
                </Glyph>
              </AppButton>
            ))}
          </Apps>
          <Clock>
            11:08 PM
            <br />
            10/11/2022
          </Clock>
        </Taskbar>
      </Window>
    </>
  );
};

export default App;
